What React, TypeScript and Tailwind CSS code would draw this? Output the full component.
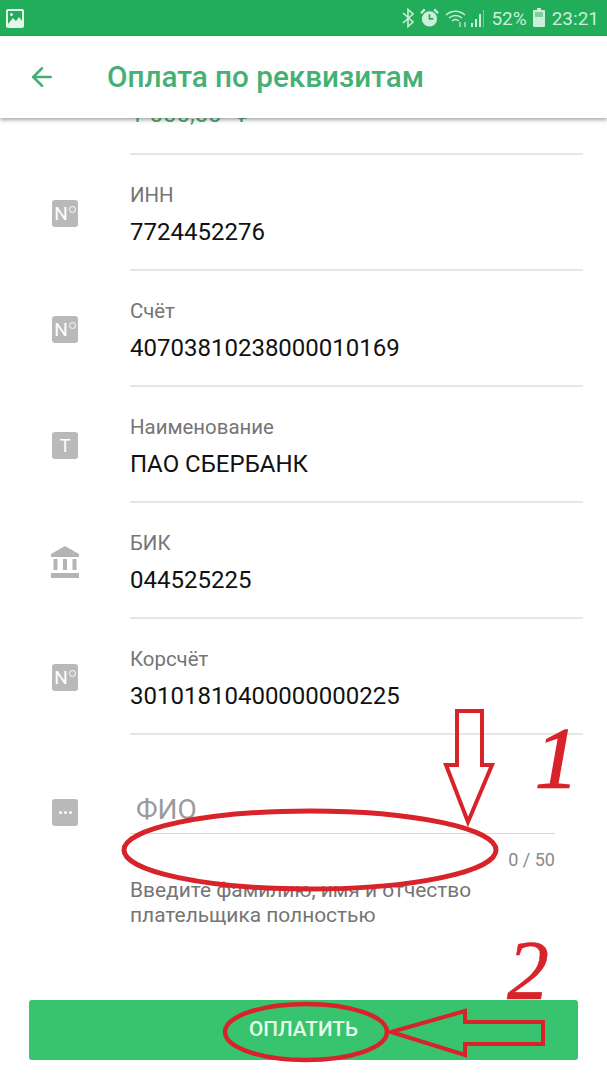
import { ArrowLeft } from "lucide-react";

const rows = [
  { label: "ИНН", value: "7724452276", icon: "no" },
  { label: "Счёт", value: "40703810238000010169", icon: "no" },
  { label: "Наименование", value: "ПАО СБЕРБАНК", icon: "t" },
  { label: "БИК", value: "044525225", icon: "bank" },
  { label: "Корсчёт", value: "30101810400000000225", icon: "no" },
];

function BadgeIcon({ children }: { children: React.ReactNode }) {
  return (
    <div className="flex h-[27px] w-[26px] items-center justify-center rounded-[3px] bg-[#b9b9b9] text-white">
      {children}
    </div>
  );
}

function FieldIcon({ kind }: { kind: string }) {
  if (kind === "bank") {
    return (
      <svg viewBox="0 0 30 32" className="-ml-[2px] -mt-[2px] h-[32px] w-[30px] fill-[#b4b4b4]">
        <path d="M15 0 L29 8 V11 H1 V8 Z" />
        <rect x="3.500" y="13" width="4" height="11" />
        <rect x="13" y="13" width="4" height="11" />
        <rect x="22.500" y="13" width="4" height="11" />
        <rect x="1" y="27" width="28" height="5" />
      </svg>
    );
  }
  if (kind === "t") {
    return (
      <BadgeIcon>
        <span className="text-[18px] leading-none">T</span>
      </BadgeIcon>
    );
  }
  if (kind === "dots") {
    return (
      <BadgeIcon>
        <span className="flex gap-[2px]">
          <i className="h-[3px] w-[3px] rounded-full bg-white" />
          <i className="h-[3px] w-[3px] rounded-full bg-white" />
          <i className="h-[3px] w-[3px] rounded-full bg-white" />
        </span>
      </BadgeIcon>
    );
  }
  return (
    <BadgeIcon>
      <span className="flex items-start text-[19px] leading-none">
        N<i className="ml-[1px] mt-[2px] h-[7px] w-[7px] rounded-full border border-white" />
      </span>
    </BadgeIcon>
  );
}

function StatusBar() {
  return (
    <div className="flex h-[36px] items-center justify-between bg-[#21ad5a] pl-[6px] pr-[8px] text-[#cdeed9]">
      <svg viewBox="0 0 18 19" className="h-[19px] w-[18px]">
        <rect width="18" height="19" rx="2" fill="#e6f6ec" />
        <rect x="2" y="2" width="14" height="13" fill="#21ad5a" />
        <circle cx="5.500" cy="5.500" r="1.500" fill="#e6f6ec" />
        <path d="M2 15 L7 9 L10 12 L13 8 L16 12 V15 Z" fill="#e6f6ec" />
      </svg>
      <div className="flex items-center">
        <svg viewBox="0 0 12 20" className="h-[20px] w-[12px] fill-none stroke-[#cdeed9] stroke-[1.6]">
          <path d="M1 5 L11 14 L6 18.500 V1.500 L11 6 L1 15" />
        </svg>
        <svg viewBox="0 0 20 20" className="ml-[6px] h-[20px] w-[19px]">
          <circle cx="10" cy="11" r="8" fill="#cdeed9" />
          <path d="M10 6 V11 H14" fill="none" stroke="#21ad5a" strokeWidth="1.800" />
          <path d="M1 5 L5 1 M19 5 L15 1" stroke="#cdeed9" strokeWidth="2.500" />
        </svg>
        <svg viewBox="0 0 24 20" className="ml-[6px] h-[20px] w-[24px] fill-none stroke-[#cdeed9] stroke-[1.500]">
          <path d="M1 7 A14 14 0 0 1 20 7 M4 10 A10 10 0 0 1 17 10 M7 13 A5.500 5.500 0 0 1 14 13" />
          <path d="M15 14 V19 M20 19 V14" strokeWidth="1.200" />
        </svg>
        <svg viewBox="0 0 16 20" className="ml-[1px] h-[20px] w-[16px] fill-[#cdeed9]">
          <rect x="1" y="15" width="2" height="4" />
          <rect x="5" y="11" width="2" height="8" />
          <rect x="9" y="6" width="2" height="13" />
          <rect x="13" y="2" width="1" height="17" opacity="0.500" />
        </svg>
        <span className="ml-[5px] font-['Roboto',sans-serif] text-[19px] leading-none">52%</span>
        <svg viewBox="0 0 12 20" className="ml-[6px] h-[20px] w-[12px]">
          <rect x="4" y="0" width="4" height="2" fill="#cdeed9" />
          <rect x="0" y="2" width="12" height="17" rx="1" fill="#cdeed9" />
          <rect x="2" y="4" width="8" height="5" fill="#7fcf9f" />
        </svg>
        <span className="ml-[7px] font-['Roboto',sans-serif] text-[19px] leading-none">23:21</span>
      </div>
    </div>
  );
}

function Annotations() {
  return (
    <>
      <svg viewBox="0 0 607 1080" className="pointer-events-none absolute inset-0 h-[1080px] w-[607px] fill-none stroke-[#d8232a]">
        <ellipse cx="310" cy="850" rx="186" ry="39" strokeWidth="5" />
        <path d="M457 711 H482 V765 H492 L468 822 L446 765 H457 Z" strokeWidth="4" />
        <ellipse cx="306" cy="1032" rx="81" ry="28" strokeWidth="4.500" />
        <path d="M391 1032 L465 1011 V1022 L543 1022 V1044 H465 V1055 Z" strokeWidth="4" />
      </svg>
      <span className="absolute left-[535px] top-[714px] font-['Liberation_Serif',serif] text-[87px] italic leading-none text-[#d8232a] [-webkit-text-stroke:1.5px_#d8232a]">
        1
      </span>
      <span className="absolute left-[507px] top-[929px] font-['Liberation_Serif',serif] text-[84px] italic leading-none text-[#d8232a] [-webkit-text-stroke:0.6px_#d8232a]">
        2
      </span>
    </>
  );
}

export default function App() {
  return (
    <div className="relative h-[1080px] w-[607px] overflow-hidden bg-white font-['Roboto',sans-serif]">
      <StatusBar />
      <header className="relative z-10 flex h-[82px] items-center bg-white pl-[27px] shadow-[0_2px_4px_rgba(0,0,0,0.35)]">
        <ArrowLeft className="h-[30px] w-[30px] text-[#45b074]" strokeWidth={2} />
        <h1 className="ml-[50px] text-[29.7px] font-medium text-[#45b074]">Оплата по реквизитам</h1>
      </header>

      <div className="ml-[130px] mr-[24px] flow-root h-[37px] border-b-2 border-[#e6e6e6]">
        <p className="-mt-[16px] text-[24px] leading-[24px] text-[#45b074]">
          1 000,00<span className="ml-[16px]">₽</span>
        </p>
      </div>

      {rows.map((row) => (
        <div key={row.label} className="flex h-[116px]">
          <div className="w-[130px] pl-[52px] pt-[45px]">
            <FieldIcon kind={row.icon} />
          </div>
          <div className="flex-1 pr-[24px]">
            <div className="h-full border-b-2 border-[#e6e6e6] pt-[28px]">
              <p className="text-[20.4px] leading-[24px] text-[#757575]">{row.label}</p>
              <p className="mt-[11px] text-[24px] leading-[28px] text-[#111111]">{row.value}</p>
            </div>
          </div>
        </div>
      ))}

      <div className="flex h-[208px]">
        <div className="w-[130px] pl-[52px] pt-[64px]">
          <FieldIcon kind="dots" />
        </div>
        <div className="flex-1 pr-[52px] pt-[58px]">
          <p className="pl-[6px] text-[28px] leading-[34px] text-[#9b9b9b]">ФИО</p>
          <div className="mt-[6px] h-px bg-[#d9d9d9]" />
          <p className="mt-[16px] text-right text-[18px] leading-[20px] text-[#8a8a8a]">0 / 50</p>
          <p className="mt-[8px] w-[400px] text-[20.9px] leading-[25px] text-[#757575]">
            Введите фамилию, имя и отчество плательщика полностью
          </p>
        </div>
      </div>

      <div className="mt-[57px] px-[29px]">
        <button className="flex h-[60px] w-[549px] items-center justify-center rounded-[3px] bg-[#38c46f] text-[20.7px] font-medium text-[#e8fbe9]">
          ОПЛАТИТЬ
        </button>
      </div>

      <Annotations />
    </div>
  );
}
